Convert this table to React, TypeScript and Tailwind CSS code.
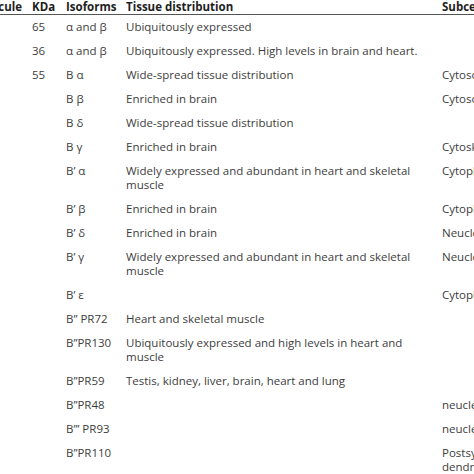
type Row = {
  kda?: string;
  iso: string;
  tissue?: string;
  sub?: string;
};

const rows: Row[] = [
  { kda: "65", iso: "α and β", tissue: "Ubiquitously expressed" },
  { kda: "36", iso: "α and β", tissue: "Ubiquitously expressed. High levels in brain and heart." },
  { kda: "55", iso: "B α", tissue: "Wide-spread tissue distribution", sub: "Cytosol" },
  { iso: "B β", tissue: "Enriched in brain", sub: "Cytosol" },
  { iso: "B δ", tissue: "Wide-spread tissue distribution" },
  { iso: "B γ", tissue: "Enriched in brain", sub: "Cytoskeleton" },
  { iso: "B’ α", tissue: "Widely expressed and abundant in heart and skeletal muscle", sub: "Cytoplasm" },
  { iso: "B’ β", tissue: "Enriched in brain", sub: "Cytoplasm" },
  { iso: "B’ δ", tissue: "Enriched in brain", sub: "Neucleus" },
  { iso: "B’ γ", tissue: "Widely expressed and abundant in heart and skeletal muscle", sub: "Neucleus" },
  { iso: "B’ ε", sub: "Cytoplasm" },
  { iso: "B” PR72", tissue: "Heart and skeletal muscle" },
  { iso: "B”PR130", tissue: "Ubiquitously expressed and high levels in heart and muscle" },
  { iso: "B”PR59", tissue: "Testis, kidney, liver, brain, heart and lung" },
  { iso: "B”PR48", sub: "neucleus" },
  { iso: "B”’ PR93", sub: "neucleus" },
  { iso: "B”PR110", sub: "Postsynaptic dendrites" },
];

export default function App() {
  return (
    <div className="w-[474px] h-[474px] overflow-hidden bg-white font-['Open_Sans',sans-serif] text-[11.5px] leading-[14px]">
      <table className="table-fixed border-collapse -ml-[30px] w-[552px]">
        <colgroup>
          <col className="w-[62px]" />
          <col className="w-[34px]" />
          <col className="w-[60px]" />
          <col className="w-[316px]" />
          <col className="w-[80px]" />
        </colgroup>
        <thead>
          <tr className="border-b border-[#555] text-[#1e1e1e] whitespace-nowrap">
            <th className="text-left font-bold">Molecule</th>
            <th className="text-left font-bold">KDa</th>
            <th className="text-left font-bold">Isoforms</th>
            <th className="text-left font-bold">Tissue distribution</th>
            <th className="text-left font-bold">Subcellular localization</th>
          </tr>
        </thead>
        <tbody className="text-[#3d3d3d]">
          {rows.map((r, i) => (
            <tr key={i} className="align-top">
              <td className="py-[5px]"></td>
              <td className="py-[5px]">{r.kda}</td>
              <td className="py-[5px] whitespace-nowrap">{r.iso}</td>
              <td className="py-[5px] pr-[12px]">{r.tissue}</td>
              <td className="py-[5px]">{r.sub}</td>
            </tr>
          ))}
        </tbody>
      </table>
    </div>
  );
}
